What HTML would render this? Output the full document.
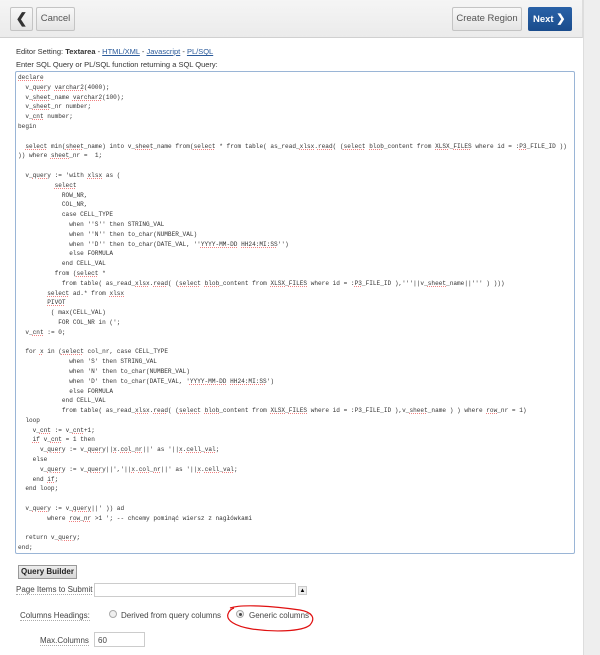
<!DOCTYPE html>
<html><head><meta charset="utf-8"><style>
*{margin:0;padding:0;box-sizing:border-box}
body{width:600px;height:655px;overflow:hidden;background:#fff;font-family:"Liberation Sans",sans-serif;position:relative}
.a{position:absolute}
.btn{position:absolute;border:1px solid #c4c4c4;border-radius:2px;background:linear-gradient(#f8f8f8,#e4e4e4);color:#555;font-size:9.5px;text-align:center}
pre{position:absolute;left:18px;top:73px;font-family:"Liberation Mono",monospace;font-size:6.1px;line-height:9.79px;color:#333}
u{text-decoration:underline dotted #f08080;text-decoration-thickness:1px}
.lbl{position:absolute;font-size:8px;color:#444;border-bottom:1px dotted #aaa}
</style></head><body>
<div class="a" style="left:583px;top:0;width:17px;height:655px;background:#eeeeee"></div>
<div class="a" style="left:0;top:0;width:583px;height:38px;background:linear-gradient(#f5f5f5,#ebebeb);border-bottom:1px solid #d0d0d0;border-right:1px solid #ddd"></div>
<div class="btn" style="left:10px;top:7px;width:23px;height:24px;font-size:14px;line-height:21px;color:#333;font-weight:bold">&#10094;</div>
<div class="btn" style="left:36px;top:7px;width:39px;height:24px;line-height:22px">Cancel</div>
<div class="btn" style="left:452px;top:7px;width:70px;height:24px;line-height:22px">Create Region</div>
<div class="a" style="left:528px;top:7px;width:44px;height:24px;border-radius:2px;background:linear-gradient(#2a62a8,#1a4c8c);color:#fff;font-size:9.5px;font-weight:bold;line-height:24px;padding-left:5px">Next <span style="font-size:11px">&#10095;</span></div>
<div class="a" style="left:583px;top:0;width:1px;height:655px;background:#ddd"></div>
<div class="a" style="left:16px;top:47px;font-size:7.5px;color:#333">Editor Setting: <b>Textarea</b> - <span style="color:#2a5a9a;text-decoration:underline">HTML/XML</span> - <span style="color:#2a5a9a;text-decoration:underline">Javascript</span> - <span style="color:#2a5a9a;text-decoration:underline">PL/SQL</span></div>
<div class="a" style="left:16px;top:60px;font-size:7.5px;color:#333">Enter SQL Query or PL/SQL function returning a SQL Query:</div>
<div class="a" style="left:15px;top:71px;width:560px;height:483px;border:1px solid #9ab5d6;border-radius:2px"></div>
<pre><u>declare</u>
  v_<u>query</u> <u>varchar2</u>(4000);
  v_<u>sheet</u>_name <u>varchar2</u>(100);
  v_<u>sheet</u>_nr number;
  v_<u>cnt</u> number;
begin

  <u>select</u> min(<u>sheet</u>_name) into v_<u>sheet</u>_name from(<u>select</u> * from table( as_read_<u>xlsx</u>.<u>read</u>( (<u>select</u> <u>blob</u>_content from <u>XLSX</u>_<u>FILES</u> where id = :<u>P3</u>_FILE_ID ))
)) where <u>sheet</u>_nr =  1;

  v_<u>query</u> := 'with <u>xlsx</u> as (
          <u>select</u>
            ROW_NR,
            COL_NR,
            case CELL_TYPE
              when ''S'' then STRING_VAL
              when ''N'' then to_char(NUMBER_VAL)
              when ''D'' then to_char(DATE_VAL, ''<u>YYYY-MM-DD</u> <u>HH24:MI:SS</u>'')
              else FORMULA
            end CELL_VAL
          from (<u>select</u> *
            from table( as_read_<u>xlsx</u>.<u>read</u>( (<u>select</u> <u>blob</u>_content from <u>XLSX</u>_<u>FILES</u> where id = :<u>P3</u>_FILE_ID ),'''||v_<u>sheet</u>_name||''' ) )))
        <u>select</u> ad.* from <u>xlsx</u>
        <u>PIVOT</u>
         ( max(CELL_VAL)
           FOR COL_NR in (';
  v_<u>cnt</u> := 0;

  for <u>x</u> in (<u>select</u> col_nr, case CELL_TYPE
              when 'S' then STRING_VAL
              when 'N' then to_char(NUMBER_VAL)
              when 'D' then to_char(DATE_VAL, '<u>YYYY-MM-DD</u> <u>HH24:MI:SS</u>')
              else FORMULA
            end CELL_VAL
            from table( as_read_<u>xlsx</u>.<u>read</u>( (<u>select</u> <u>blob</u>_content from <u>XLSX</u>_<u>FILES</u> where id = :P3_FILE_ID ),v_<u>sheet</u>_name ) ) where <u>row</u>_nr = 1)
  loop
    v_<u>cnt</u> := v_<u>cnt</u>+1;
    <u>if</u> v_<u>cnt</u> = 1 then
      v_<u>query</u> := v_<u>query</u>||<u>x</u>.<u>col</u>_<u>nr</u>||' as '||<u>x</u>.<u>cell</u>_<u>val</u>;
    else
      v_<u>query</u> := v_<u>query</u>||','||<u>x</u>.<u>col</u>_<u>nr</u>||' as '||<u>x</u>.<u>cell</u>_<u>val</u>;
    end <u>if</u>;
  end loop;

  v_<u>query</u> := v_<u>query</u>||' )) ad
        where <u>row</u>_<u>nr</u> &gt;1 '; -- chcemy pominąć wiersz z nagłówkami

  return v_<u>query</u>;
end;</pre>
<div class="a" style="left:18px;top:565px;width:59px;height:14px;border:1px solid #999;background:linear-gradient(#eee,#d8d8d8);font-size:8px;font-weight:bold;line-height:12px;text-align:center;color:#222">Query Builder</div>
<div class="lbl" style="left:16px;top:585px">Page Items to Submit</div>
<div class="a" style="left:94px;top:583px;width:202px;height:14px;border:1px solid #ccc"></div>
<div class="a" style="left:298px;top:586px;width:9px;height:9px;border:1px solid #ccc;background:#eee;font-size:6px;text-align:center;line-height:8px">&#9650;</div>
<div class="lbl" style="left:20px;top:611px">Columns Headings:</div>
<div class="a" style="left:109px;top:610px;width:8px;height:8px;border-radius:50%;border:1px solid #aaa;background:#f0f0f0"></div>
<div class="a" style="left:121px;top:611px;font-size:8px;color:#444">Derived from query columns</div>
<div class="a" style="left:236px;top:610px;width:8px;height:8px;border-radius:50%;border:1px solid #aaa;background:#f0f0f0"><div style="margin:1.5px;width:3px;height:3px;border-radius:50%;background:#444"></div></div>
<div class="a" style="left:249px;top:611px;font-size:8px;color:#444">Generic columns</div>
<svg class="a" style="left:222px;top:602px" width="96" height="32"><path d="M8 6 C20 2 50 4 78 8 C90 10 94 16 88 23 C80 30 50 30 30 27 C12 24 4 18 6 12 C7 9 9 7 12 6" fill="none" stroke="#e01010" stroke-width="1.2"/></svg>
<div class="lbl" style="left:40px;top:636px">Max.Columns</div>
<div class="a" style="left:94px;top:632px;width:51px;height:15px;border:1px solid #ccc;font-size:8px;color:#444;padding:3px 0 0 3px">60</div>
</body></html>
